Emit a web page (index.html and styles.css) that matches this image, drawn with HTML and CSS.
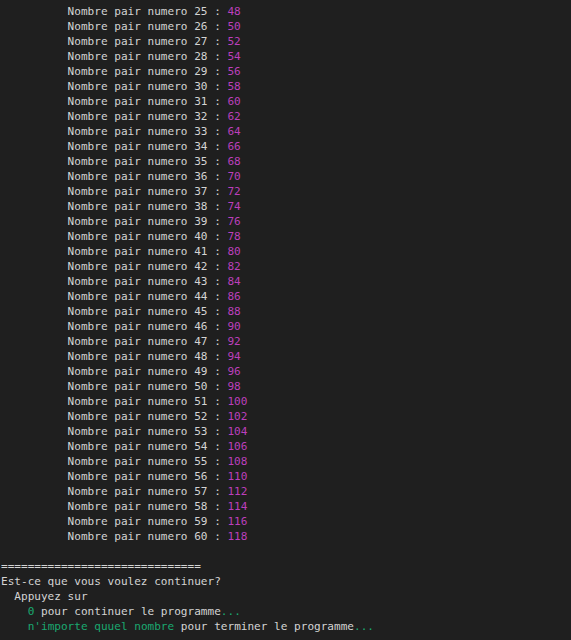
FILE: index.html
```html
<!DOCTYPE html>
<html>
<head>
<meta charset="utf-8">
<link rel="stylesheet" href="styles.css">
</head>
<body>
<pre class="term" id="term"></pre>
<script src="script.js"></script>
</body>
</html>
```
FILE: styles.css
```css
html, body {
  margin: 0;
  padding: 0;
  background: #1f1f1f;
}
.term {
  margin: 0;
  padding: 4px 0 0 1px;
  font-family: "DejaVu Sans Mono", "Liberation Mono", monospace;
  font-size: 11.07px;
  line-height: 15px;
  color: #d4d4d4;
  white-space: pre;
}
.num { color: #bc3fbc; }
.grn { color: #1aa870; }
```
FILE: script.js
```js
var t = document.getElementById('term');
var h = '';
for (var i = 25; i <= 60; i++) {
  h += '          Nombre pair numero ' + i + ' : <span class="num">' + (2 * i - 2) + '</span>\n';
}
h += '\n';
h += '==============================\n';
h += 'Est-ce que vous voulez continuer?\n';
h += '  Appuyez sur\n';
h += '    <span class="grn">0</span> pour continuer le programme<span class="grn">...</span>\n';
h += '    <span class="grn">n\'importe quuel nombre</span> pour terminer le programme<span class="grn">...</span>';
t.innerHTML = h;
```
